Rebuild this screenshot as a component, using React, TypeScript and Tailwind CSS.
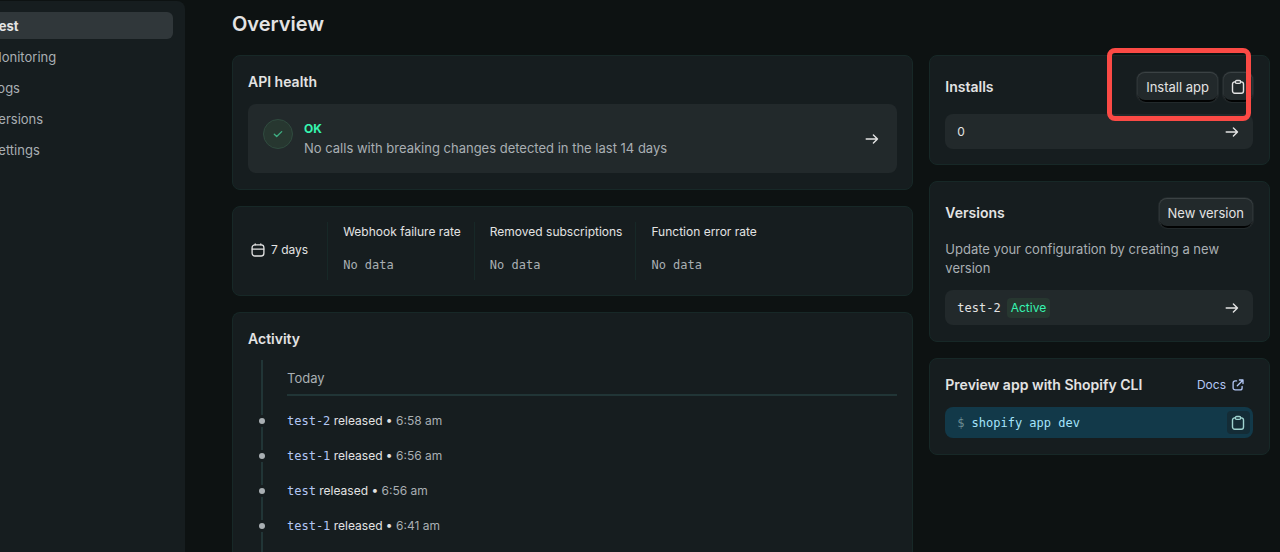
import type { ReactNode } from "react";

const navItems = ["Monitoring", "Logs", "Versions", "Settings"];

const metrics = ["Webhook failure rate", "Removed subscriptions", "Function error rate"];

const releases = [
  { version: "test-2", time: "6:58 am" },
  { version: "test-1", time: "6:56 am" },
  { version: "test", time: "6:56 am" },
  { version: "test-1", time: "6:41 am" },
];

const mono = "font-['DejaVu_Sans_Mono','Liberation_Mono',monospace] text-[12px]";

function ArrowIcon() {
  return (
    <svg width="14" height="14" viewBox="0 0 14 14" fill="none" stroke="#e3e3e3" strokeWidth="1.4" strokeLinecap="round" strokeLinejoin="round" aria-hidden="true">
      <path d="M1.2 7h11.3M8.4 2.9 12.5 7l-4.1 4.1" />
    </svg>
  );
}

function ClipboardIcon({ className }: { className: string }) {
  return (
    <svg width="14" height="16" viewBox="0 0 14 16" fill="none" stroke="currentColor" strokeWidth="1.4" strokeLinejoin="round" className={className} aria-hidden="true">
      <path d="M4.4 2.9H3.7A2.2 2.2 0 0 0 1.5 5.1V12a2.2 2.2 0 0 0 2.2 2.2h6.6a2.2 2.2 0 0 0 2.2-2.2V5.1a2.2 2.2 0 0 0-2.2-2.2H9.6" />
      <rect x="4.3" y="1.5" width="5.4" height="2.9" rx="1.4" />
    </svg>
  );
}

function CalendarIcon() {
  return (
    <svg width="14" height="14" viewBox="0 0 14 14" fill="none" stroke="#e3e3e3" strokeWidth="1.3" strokeLinecap="round" aria-hidden="true">
      <rect x="1.1" y="1.8" width="11.8" height="11.2" rx="2.8" />
      <path d="M1.2 6.1h11.6M4.2 .9v.9M9.8 .9v.9" />
    </svg>
  );
}

function ExternalIcon() {
  return (
    <svg width="12" height="12" viewBox="0 0 12 12" fill="none" stroke="currentColor" strokeWidth="1.3" strokeLinecap="round" strokeLinejoin="round" aria-hidden="true">
      <path d="M4.6 1.9H3.1A2 2 0 0 0 1.1 3.9v5a2 2 0 0 0 2 2h5a2 2 0 0 0 2-2V7.4M7.4 1h3.6v3.6M10.8 1.2 5.3 6.7" />
    </svg>
  );
}

function Card({ children, className = "px-[15px]" }: { children: ReactNode; className?: string }) {
  return (
    <section className={`relative rounded-lg border border-[#172827] bg-[#161d1f] ${className}`}>
      {children}
    </section>
  );
}

const buttonStyle =
  "flex h-[30px] items-center justify-center rounded-lg bg-[#22292b] text-[13px] text-[#e3e3e3] shadow-[inset_0_1px_0_#3b4244,inset_1px_0_0_#2c3335,inset_-1px_0_0_#2c3335,inset_0_-2px_0_#020303,0_0_0_1px_#22292b]";

export default function App() {
  return (
    <div className="flex h-screen overflow-hidden bg-[#0d1212] font-['Inter',sans-serif] text-[13px] leading-5 text-[#e3e3e3]">
      <aside className="mt-px w-[185px] shrink-0 overflow-hidden rounded-tr-lg bg-[#161d1f] pt-[11px] pr-3">
        <nav className="flex flex-col gap-1">
          <a href="#test" className="flex h-[27px] items-center rounded-r-md bg-[#30373a] font-bold">
            <span className="-ml-[6px]">test</span>
          </a>
          {navItems.map((item) => (
            <a key={item} href={`#${item.toLowerCase()}`} className="flex h-[27px] items-center text-[#a9afb3]">
              <span className="-ml-[10px]">{item}</span>
            </a>
          ))}
        </nav>
      </aside>

      <main className="flex min-w-0 flex-1 flex-col pt-3 pr-[10px] pl-[47px]">
        <h1 className="text-[20px] leading-6 font-semibold">Overview</h1>

        <div className="mt-[19px] grid min-h-0 flex-1 grid-cols-[2fr_1fr] gap-4">
          <div className="flex min-w-0 flex-col gap-4">
            <Card className="px-[15px] py-4">
              <h2 className="text-[14px] font-semibold">API health</h2>
              <a href="#health" className="mt-3 flex h-[69px] items-center rounded-lg bg-[#22292b] px-[15px]">
                <span className="mb-[10px] flex size-[30px] items-center justify-center rounded-full border border-[#304b3f] bg-[#273730]">
                  <svg width="10" height="8" viewBox="0 0 10 8" fill="none" stroke="#3fb083" strokeWidth="1.3" strokeLinecap="round" strokeLinejoin="round" aria-hidden="true">
                    <path d="M1.3 4.2 3.7 6.5 8.7 1.6" />
                  </svg>
                </span>
                <span className="ml-[11px] flex-1">
                  <strong className="block text-[12px] font-bold text-[#36f5b0]">OK</strong>
                  <span className="block leading-[19px] text-[#a9afb3]">No calls with breaking changes detected in the last 14 days</span>
                </span>
                <span className="mr-[3px]">
                  <ArrowIcon />
                </span>
              </a>
            </Card>

            <Card className="flex h-[90px] items-stretch px-[15px] py-[15px]">
              <div className="flex items-center gap-[6px] pr-[19px] pb-[2px] pl-[3px] text-[12px]">
                <CalendarIcon />
                7 days
              </div>
              {metrics.map((metric) => (
                <div key={metric} className="border-l border-[#172827] pr-[13px] pl-[15px] text-[12px]">
                  <div>{metric}</div>
                  <div className={`mt-[13px] text-[#a9afb3] ${mono}`}>No data</div>
                </div>
              ))}
            </Card>

            <Card className="flex min-h-0 flex-1 flex-col rounded-b-none border-b-0 px-[15px] pt-4">
              <h2 className="text-[14px] font-semibold">Activity</h2>
              <div className="mt-[11px] grid shrink-0 grid-cols-[28px_1fr] gap-x-[11px]">
                <div className="w-[2px] justify-self-center bg-[#213536]" />
                <h3 className="mb-[7px] border-b-2 border-[#213536] pt-2 pb-[6px] text-[#a9afb3]">Today</h3>
              </div>
              <ol className="shrink-0">
                {releases.map((release, index) => (
                  <li key={index} className="grid h-[35px] grid-cols-[28px_1fr] items-center gap-x-[11px]">
                    <div className="flex h-full flex-col items-center">
                      <div className="w-[2px] flex-1 bg-[#213536]" />
                      <div className="my-[3px] size-[6px] rounded-full bg-[#a9afb3]" />
                      <div className="w-[2px] flex-1 bg-[#213536]" />
                    </div>
                    <p className="text-[12px]">
                      <a href={`#${release.version}`} className={`text-[#b3c7f5] ${mono}`}>{release.version}</a>
                      {" released • "}
                      <time className="text-[#a9afb3]">{release.time}</time>
                    </p>
                  </li>
                ))}
              </ol>
              <div className="ml-[13px] w-[2px] flex-1 bg-[#213536]" />
            </Card>
          </div>

          <div className="flex min-w-0 flex-col gap-4">
            <Card className="pt-4 pr-4 pb-[15px] pl-[15px]">
              <div className="flex h-[30px] items-center justify-between">
                <h2 className="text-[14px] font-semibold">Installs</h2>
                <div className="flex gap-[5px]">
                  <button className={`${buttonStyle} px-[9px]`}>Install app</button>
                  <button aria-label="Copy install link" className={`${buttonStyle} w-[30px]`}>
                    <ClipboardIcon className="text-[#e3e3e3]" />
                  </button>
                </div>
              </div>
              <a href="#installs" className="mt-3 flex h-[35px] items-center justify-between rounded-lg bg-[#22292b] pr-[14px] pl-3 text-[12px]">
                0
                <ArrowIcon />
              </a>
              <div className="pointer-events-none absolute -top-2 right-[18px] h-[73px] w-[144px] rounded-lg border-[5px] border-[#fb4a45]" />
            </Card>

            <Card className="py-4 pr-4 pl-[15px]">
              <div className="flex h-[30px] items-center justify-between">
                <h2 className="text-[14px] font-semibold">Versions</h2>
                <button className={`${buttonStyle} px-[9px]`}>New version</button>
              </div>
              <p className="mt-3 leading-[19px] text-[#a9afb3]">Update your configuration by creating a new version</p>
              <a href="#versions" className="mt-3 flex h-[35px] items-center rounded-lg bg-[#22292b] pr-[14px] pl-3">
                <span className={mono}>test-2</span>
                <span className="ml-[6px] rounded bg-[#273730] px-1 text-[12px] text-[#36f5b0]">Active</span>
                <span className="ml-auto">
                  <ArrowIcon />
                </span>
              </a>
            </Card>

            <Card className="py-4 pr-4 pl-[15px]">
              <div className="flex items-center justify-between">
                <h2 className="text-[14px] font-semibold">Preview app with Shopify CLI</h2>
                <a href="#docs" className="mr-[9px] flex items-center gap-[6px] text-[12px] text-[#b3c7f5]">
                  Docs
                  <ExternalIcon />
                </a>
              </div>
              <div className={`mt-3 flex h-[31px] items-center rounded-lg bg-[#123949] pr-[3px] pl-3 ${mono}`}>
                <span className="mr-[7px] text-[#6b8d93]">$</span>
                <code className={`text-[#a5e4fb] ${mono}`}>shopify app dev</code>
                <button aria-label="Copy command" className="ml-auto flex size-[23px] items-center justify-center rounded bg-[#142c36]">
                  <ClipboardIcon className="text-[#9fd3cf]" />
                </button>
              </div>
            </Card>
          </div>
        </div>
      </main>
    </div>
  );
}
